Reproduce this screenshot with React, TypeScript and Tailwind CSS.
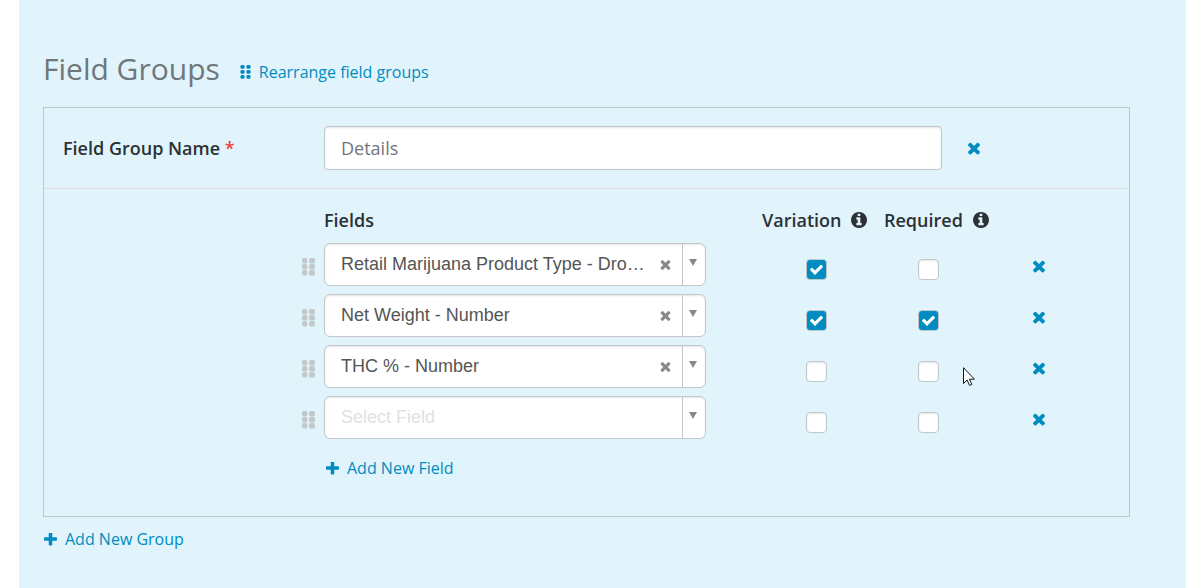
import React from 'react';

type IconProps = { className?: string };

function TimesIcon({ className }: IconProps) {
  return (
    <svg viewBox="0 0 1792 1792" fill="currentColor" className={className} aria-hidden="true">
      <path d="M1490 1322q0 40-28 68l-136 136q-28 28-68 28t-68-28l-294-294-294 294q-28 28-68 28t-68-28l-136-136q-28-28-28-68t28-68l294-294-294-294q-28-28-28-68t28-68l136-136q28-28 68-28t68 28l294 294 294-294q28-28 68-28t68 28l136 136q28 28 28 68t-28 68l-294 294 294 294q28 28 28 68z" />
    </svg>
  );
}

function PlusIcon({ className }: IconProps) {
  return (
    <svg viewBox="192 192 1408 1408" fill="currentColor" className={className} aria-hidden="true">
      <path d="M1600 736v192q0 40-28 68t-68 28h-416v416q0 40-28 68t-68 28h-192q-40 0-68-28t-28-68v-416h-416q-40 0-68-28t-28-68v-192q0-40 28-68t68-28h416v-416q0-40 28-68t68-28h192q40 0 68 28t28 68v416h416q40 0 68 28t28 68z" />
    </svg>
  );
}

function InfoIcon({ className }: IconProps) {
  return (
    <svg viewBox="128 128 1536 1536" fill="currentColor" className={className} aria-hidden="true">
      <path d="M1152 1376v-160q0-14-9-23t-23-9h-96v-512q0-14-9-23t-23-9h-320q-14 0-23 9t-9 23v160q0 14 9 23t23 9h96v320h-96q-14 0-23 9t-9 23v160q0 14 9 23t23 9h448q14 0 23-9t9-23zm-128-896v-160q0-14-9-23t-23-9h-192q-14 0-23 9t-9 23v160q0 14 9 23t23 9h192q14 0 23-9t9-23zm640 416q0 209-103 385.5t-279.5 279.5-385.5 103-385.5-103-279.5-279.5-103-385.5 103-385.5 279.5-279.5 385.5-103 385.5 103 279.5 279.5 103 385.5z" />
    </svg>
  );
}

function CheckIcon({ className }: IconProps) {
  return (
    <svg viewBox="0 0 1792 1792" fill="currentColor" className={className} aria-hidden="true">
      <path d="M1671 566q0 40-28 68l-724 724-136 136q-28 28-68 28t-68-28l-136-136-362-362q-28-28-28-68t28-68l136-136q28-28 68-28t68 28l294 295 656-657q28-28 68-28t68 28l136 136q28 28 28 68z" />
    </svg>
  );
}

// Six dots, two columns of three
function GripIcon({ className }: IconProps) {
  return (
    <svg viewBox="0 0 13 18" fill="currentColor" className={className} aria-hidden="true">
      {[0, 6, 12].map((y) => (
        <React.Fragment key={y}>
          <rect x="0" y={y} width="5.4" height="5.4" rx="1.7" />
          <rect x="7" y={y} width="6" height="5.6" rx="1.9" />
        </React.Fragment>
      ))}
    </svg>
  );
}

// Smaller grip used inside links
function GripSmallIcon({ className }: IconProps) {
  return (
    <svg viewBox="0 0 11 14" fill="currentColor" className={className} aria-hidden="true">
      {[0, 5, 10].map((y) => (
        <React.Fragment key={y}>
          <rect x="0.5" y={y} width="4" height="3.8" rx="1.2" />
          <rect x="6.5" y={y} width="4" height="3.8" rx="1.2" />
        </React.Fragment>
      ))}
    </svg>
  );
}

type CheckboxProps = {
  label: string;
  checked: boolean;
  onChange: () => void;
};

function Checkbox({ label, checked, onChange }: CheckboxProps) {
  return (
    <span className="relative grid h-[21px] w-[21px]">
      <input
        type="checkbox"
        aria-label={label}
        checked={checked}
        onChange={onChange}
        className="h-[21px] w-[21px] cursor-pointer appearance-none rounded border border-[#c0c7cc] bg-white shadow-[inset_0_1px_2px_rgba(0,0,0,0.1)] checked:bg-[#008cc1] checked:shadow-none"
      />
      {checked && (
        <CheckIcon className="pointer-events-none absolute inset-0 m-auto h-[15px] w-[15px] text-white" />
      )}
    </span>
  );
}

type Field = {
  id: number;
  value: string;
  variation: boolean;
  required: boolean;
};

const OPTIONS = [
  'Retail Marijuana Product Type - Dropdown',
  'Net Weight - Number',
  'THC % - Number',
];

const INITIAL_FIELDS: Field[] = [
  { id: 1, value: OPTIONS[0], variation: true, required: false },
  { id: 2, value: OPTIONS[1], variation: true, required: true },
  { id: 3, value: OPTIONS[2], variation: false, required: false },
  { id: 4, value: '', variation: false, required: false },
];

export default function App() {
  const [name, setName] = React.useState('Details');
  const [fields, setFields] = React.useState<Field[]>(INITIAL_FIELDS);

  const update = (id: number, patch: Partial<Field>) =>
    setFields((prev) => prev.map((f) => (f.id === id ? { ...f, ...patch } : f)));

  const remove = (id: number) => setFields((prev) => prev.filter((f) => f.id !== id));

  const add = () =>
    setFields((prev) => [
      ...prev,
      { id: Date.now(), value: '', variation: false, required: false },
    ]);

  return (
    <div className="bg-white pl-[19px] font-['Open_Sans',sans-serif] text-[#2b3134]">
      <main className="min-h-screen bg-[#e1f4fc] pt-[47px] pr-14 pl-6">
        <header className="flex items-center gap-5">
          <h1 className="text-[30px] leading-[44px] text-[#6f777b]">Field Groups</h1>
          <a href="#rearrange" className="flex items-center gap-2 pt-[6px] text-base text-[#008cc1]">
            <GripSmallIcon className="h-[14px] w-[11px]" />
            Rearrange field groups
          </a>
        </header>

        <section className="mt-4 border border-[#c0c7cc]">
          {/* Group name */}
          <div className="grid grid-cols-[280px_minmax(0,618fr)_187fr] items-center border-b border-[#dddddd] py-[18px]">
            <label htmlFor="group-name" className="pl-[19px] text-lg font-semibold">
              Field Group Name <span className="text-[#f04040]">*</span>
            </label>
            <input
              id="group-name"
              type="text"
              value={name}
              onChange={(e) => setName(e.target.value)}
              className="h-11 w-full rounded border border-[#c0c7cc] bg-white px-4 text-lg text-[#6f777b] shadow-[inset_0_1px_2px_rgba(0,0,0,0.1)]"
            />
            <button type="button" aria-label="Remove group" className="ml-[23px] w-[18px] text-[#008cc1]">
              <TimesIcon className="h-[18px] w-[18px]" />
            </button>
          </div>

          {/* Fields */}
          <div className="pt-[17px] pb-9">
            <div className="mb-[9px] grid grid-cols-[280px_minmax(0,382fr)_178px_90px_155fr] text-lg leading-7 font-semibold whitespace-nowrap">
              <span className="col-start-2">Fields</span>
              <span className="flex items-center gap-[10px] pl-14">
                Variation <InfoIcon className="h-4 w-4" />
              </span>
              <span className="flex items-center gap-[10px]">
                Required <InfoIcon className="h-4 w-4 shrink-0" />
              </span>
            </div>

            <div className="flex flex-col gap-2">
              {fields.map((field) => (
                <div
                  key={field.id}
                  className="grid grid-cols-[280px_minmax(0,382fr)_178px_90px_155fr] items-center"
                >
                  <GripIcon className="mt-1 mr-[9px] h-[18px] w-[13px] cursor-move justify-self-end text-[#c3c8cb]" />

                  <div className="relative h-[43px] rounded-md border border-[#c4c6c8] bg-white shadow-[inset_0_1px_2px_rgba(0,0,0,0.1)]">
                    <select
                      aria-label="Field"
                      value={field.value}
                      onChange={(e) => update(field.id, { value: e.target.value })}
                      className={`h-full w-full appearance-none truncate bg-transparent pr-14 pb-px pl-4 font-['Liberation_Sans',sans-serif] text-lg ${
                        field.value ? 'text-[#555555]' : 'text-[#dfe2e5]'
                      }`}
                    >
                      <option value="">Select Field</option>
                      {OPTIONS.map((option) => (
                        <option key={option} value={option}>
                          {option}
                        </option>
                      ))}
                    </select>
                    {field.value && (
                      <button
                        type="button"
                        aria-label="Clear field"
                        onClick={() => update(field.id, { value: '' })}
                        className="absolute inset-y-0 right-8 text-[#8a8a8a]"
                      >
                        <TimesIcon className="h-[15px] w-[15px]" />
                      </button>
                    )}
                    <span className="pointer-events-none absolute inset-y-0 right-0 flex w-[23px] justify-center border-l border-[#c4c6c8] pt-[15px] pr-[3px]">
                      <svg viewBox="0 0 8 7" className="h-[7px] w-2" fill="#888888" aria-hidden="true">
                        <path d="M0 0h8L4 7z" />
                      </svg>
                    </span>
                  </div>

                  <div className="flex justify-center pt-[9px] pr-[14px] pl-14">
                    <Checkbox
                      label="Variation"
                      checked={field.variation}
                      onChange={() => update(field.id, { variation: !field.variation })}
                    />
                  </div>
                  <div className="flex justify-center pt-[9px] pr-px">
                    <Checkbox
                      label="Required"
                      checked={field.required}
                      onChange={() => update(field.id, { required: !field.required })}
                    />
                  </div>
                  <button
                    type="button"
                    aria-label="Remove field"
                    onClick={() => remove(field.id)}
                    className="ml-14 w-[18px] pt-[3px] text-[#008cc1]"
                  >
                    <TimesIcon className="h-[18px] w-[18px]" />
                  </button>
                </div>
              ))}
            </div>

            <button
              type="button"
              onClick={add}
              className="mt-[17px] ml-[282px] flex items-center gap-2 text-base text-[#008cc1]"
            >
              <PlusIcon className="h-[13px] w-[13px]" />
              Add New Field
            </button>
          </div>
        </section>

        <button type="button" className="mt-[10px] ml-px flex items-center gap-2 text-base text-[#008cc1]">
          <PlusIcon className="h-[13px] w-[13px]" />
          Add New Group
        </button>
      </main>

      {/* Mouse pointer */}
      <svg
        viewBox="0 0 12 19"
        className="pointer-events-none absolute top-[367px] left-[963px] h-[19px] w-3"
        aria-hidden="true"
      >
        <path
          d="M.5.7v15.8l3.6-3.5 2.4 5.4 2.3-1-2.4-5.2h5z"
          fill="#ffffff"
          stroke="#111122"
          strokeWidth="1"
        />
      </svg>
    </div>
  );
}
